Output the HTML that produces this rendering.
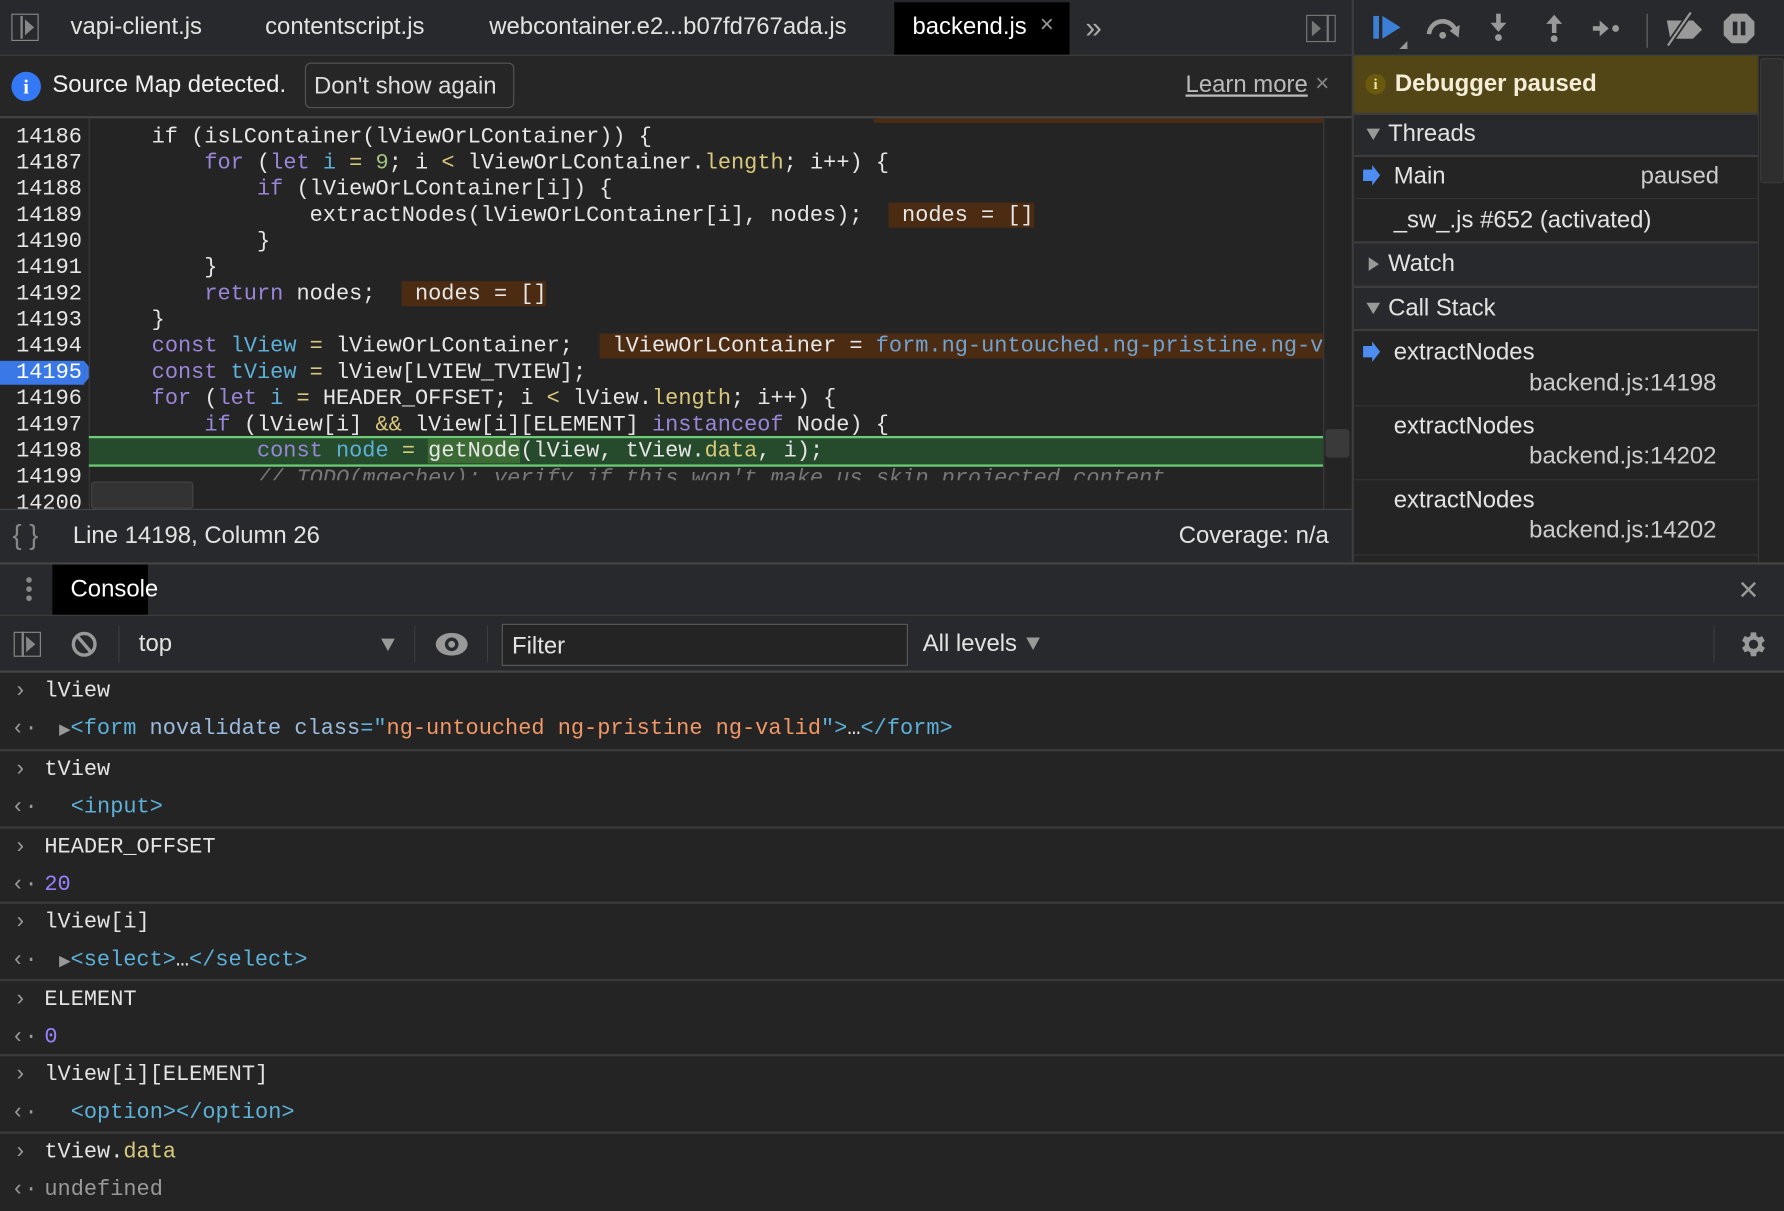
<!DOCTYPE html>
<html><head><meta charset="utf-8"><style>
html,body{margin:0;padding:0;background:#242424;overflow:hidden;width:1784px;height:1210px}
#w{position:absolute;left:0;top:0;width:1568px;height:1064px;transform:scale(1.13776,1.1383);transform-origin:0 0;background:#242424;font-family:"Liberation Sans",sans-serif;color:#e3e3e3;overflow:hidden}
.a{position:absolute}
.m{font-family:"Liberation Mono",monospace;font-size:19.3px;white-space:pre}
.s{font-size:21px;white-space:nowrap}
.k{color:#9a86d8}.b{color:#5db0d7}.y{color:#d9c97c}.g{color:#a1c181}
.iv{background:#4b2c12}
.ln{position:absolute;left:0;width:72px;text-align:right;color:#e6e6e6}
.cons{font-family:"Liberation Mono",monospace;font-size:19.3px;white-space:normal}
.cons .r{white-space:pre;position:relative;padding-left:39px}
.cons .sep{height:2px;background:#3a3a3a}
.pi{position:absolute;left:12px;color:#999}
.po{position:absolute;left:10px;color:#999}
.tri{display:inline-block;width:23px;text-align:right;color:#999;font-size:13px}
</style></head><body><div id="w">

<!-- top tab bar -->
<div class="a" style="left:0;top:0;width:1188px;height:48px;background:#28292c;border-bottom:1px solid #444"></div>
<div class="a" style="top:12px;left:10px;width:24px;height:24px;border:1.5px solid #888;box-sizing:border-box"></div>
<div class="a" style="left:18px;top:14px;width:2px;height:20px;background:#888"></div>
<div class="a" style="left:22px;top:17px;width:0;height:0;border-left:8px solid #888;border-top:7px solid transparent;border-bottom:7px solid transparent"></div>
<div class="a s" style="left:62px;top:12px">vapi-client.js</div>
<div class="a s" style="left:233px;top:12px">contentscript.js</div>
<div class="a s" style="left:430px;top:12px">webcontainer.e2...b07fd767ada.js</div>
<div class="a" style="left:786px;top:2px;width:154px;height:46px;background:#000"></div>
<div class="a s" style="left:802px;top:12px;color:#fff">backend.js</div>
<div class="a s" style="left:914px;top:10px;color:#999">×</div>
<div class="a s" style="left:954px;top:9px;color:#aaa;font-size:26px">»</div>
<div class="a" style="left:1148px;top:13px;width:26px;height:24px;border:1.5px solid #777;box-sizing:border-box"></div>
<div class="a" style="left:1166px;top:13px;width:1.5px;height:24px;background:#777"></div>
<div class="a" style="left:1153px;top:18px;border-left:8px solid #777;border-top:7px solid transparent;border-bottom:7px solid transparent"></div>

<!-- source map bar -->
<div class="a" style="left:0;top:49px;width:1188px;height:53px;background:#262626;border-bottom:2px solid #444"></div>
<div class="a" style="left:10px;top:63px;width:26px;height:26px;border-radius:50%;background:#3478f6;color:#fff;font-size:18px;font-weight:bold;text-align:center;line-height:26px;font-family:'Liberation Serif',serif">i</div>
<div class="a s" style="left:46px;top:63px;color:#f0f0f0">Source Map detected.</div>
<div class="a s" style="left:268px;top:55px;width:184px;height:40px;border:1.5px solid #555;border-radius:5px;box-sizing:border-box;padding:8px 0 0 7px;color:#ddd">Don't show again</div>
<div class="a s" style="left:1042px;top:63px;color:#bbb;text-decoration:underline">Learn more</div>
<div class="a s" style="left:1156px;top:62px;color:#888">×</div>

<!-- code area -->
<div class="a" style="left:0;top:104px;width:78px;height:343px;background:#242424;border-right:1px solid #3a3a3a"></div>
<div class="a" style="left:78px;top:104px;width:1085px;height:318px;overflow:hidden">
 <div class="a iv" style="left:690px;top:-10px;width:420px;height:14px"></div>
 <div class="m a" style="left:9px;top:5px;line-height:23px;color:#e6e6e6">    if (isLContainer(lViewOrLContainer)) {
        <span class="k">for</span> (<span class="k">let</span> <span class="b">i</span> <span class="y">=</span> <span class="g">9</span>; i <span class="y">&lt;</span> lViewOrLContainer.<span class="y">length</span>; i++) {
            <span class="k">if</span> (lViewOrLContainer[i]) {
                extractNodes(lViewOrLContainer[i], nodes);  <span class="iv"> nodes = []</span>
            }
        }
        <span class="k">return</span> nodes;  <span class="iv"> nodes = []</span>
    }
    <span class="k">const</span> <span class="b">lView</span> <span class="y">=</span> lViewOrLContainer;  <span class="iv"> lViewOrLContainer = <span style="color:#6fa3d4">form.ng-untouched.ng-pristine.ng-valid                  </span></span>
    <span class="k">const</span> <span class="b">tView</span> <span class="y">=</span> lView[LVIEW_TVIEW];
    <span class="k">for</span> (<span class="k">let</span> <span class="b">i</span> <span class="y">=</span> HEADER_OFFSET; i <span class="y">&lt;</span> lView.<span class="y">length</span>; i++) {
        <span class="k">if</span> (lView[i] <span class="y">&amp;&amp;</span> lView[i][ELEMENT] <span class="k">instanceof</span> Node) {
</div>
 <div class="a" style="left:0;top:279px;width:1085px;height:23px;background:#264a2c;border-top:2px solid #6ccb76;border-bottom:2px solid #6ccb76"></div>
 <div class="m a" style="left:9px;top:281px;line-height:23px;color:#e6e6e6">            <span class="k">const</span> <span class="b">node</span> <span class="y">=</span> <span style="background:#3c6a35">getNode</span>(lView, tView.<span class="y">data</span>, i);</div>
 <div class="m a" style="left:9px;top:305px;line-height:23px;color:#777;font-style:italic">            // TODO(mgechev): verify if this won't make us skip projected content.</div>
</div>
<div class="a m" style="left:0;top:104px;width:78px;height:343px;overflow:hidden;line-height:23px">
 <div class="ln" style="top:5px">14186</div><div class="ln" style="top:28px">14187</div><div class="ln" style="top:51px">14188</div><div class="ln" style="top:74px">14189</div><div class="ln" style="top:97px">14190</div><div class="ln" style="top:120px">14191</div><div class="ln" style="top:143px">14192</div><div class="ln" style="top:166px">14193</div><div class="ln" style="top:189px">14194</div>
 <div class="a" style="left:0;top:213px;width:74px;height:21px;background:#3b78e7"></div>
 <div class="a" style="left:74px;top:213px;border-left:8px solid #3b78e7;border-top:10.5px solid transparent;border-bottom:10.5px solid transparent"></div>
 <div class="ln" style="top:212px;color:#fff">14195</div><div class="ln" style="top:235px">14196</div><div class="ln" style="top:258px">14197</div><div class="ln" style="top:281px">14198</div><div class="ln" style="top:304px">14199</div><div class="ln" style="top:327px">14200</div>
</div>
<div class="a" style="left:79px;top:422px;width:1084px;height:25px;background:#242424"></div>
<div class="a" style="left:80px;top:423px;width:88px;height:22px;background:#333;border:1px solid #444;border-radius:3px"></div>
<div class="a" style="left:1163px;top:104px;width:25px;height:343px;background:#242424;border-left:1px solid #3a3a3a"></div>
<div class="a" style="left:1165px;top:377px;width:21px;height:25px;background:#3a3a3a;border-radius:3px"></div>

<!-- status bar -->
<div class="a" style="left:0;top:447px;width:1188px;height:47px;background:#28292c;border-top:1px solid #444"></div>
<div class="a s" style="left:11px;top:457px;color:#888;font-size:24px">{ }</div>
<div class="a s" style="left:64px;top:459px">Line 14198, Column 26</div>
<div class="a s" style="left:1036px;top:459px">Coverage: n/a</div>

<!-- sidebar -->
<div class="a" style="left:1188px;top:0;width:2px;height:494px;background:#3d3d3d"></div>
<div class="a" style="left:1190px;top:0;width:378px;height:48px;background:#28292c;border-bottom:1px solid #444"></div>
<svg class="a" style="left:1190px;top:0" width="378" height="48" viewBox="1190 0 378 48">
 <rect x="1207" y="14" width="5" height="20" fill="#3b7fd6"/><path d="M1215 14 L1231 24 L1215 34Z" fill="#3b7fd6"/><path d="M1237 36 L1230 43 L1237 43Z" fill="#999"/>
 <path d="M1256 30 A12 12 0 0 1 1279 26" stroke="#999" stroke-width="4" fill="none"/><path d="M1274 27 L1283 22 L1282 33Z" fill="#999"/><circle cx="1268" cy="31" r="3" fill="#999"/>
 <rect x="1315" y="12" width="4" height="10" fill="#999"/><path d="M1310 20 L1324 20 L1317 28Z" fill="#999"/><circle cx="1317" cy="33" r="3" fill="#999"/>
 <path d="M1359 21 L1373 21 L1366 13Z" fill="#999"/><rect x="1364" y="20" width="4" height="9" fill="#999"/><circle cx="1366" cy="34" r="3" fill="#999"/>
 <rect x="1400" y="23" width="8" height="4" fill="#999"/><path d="M1406 18 L1414 25 L1406 32Z" fill="#999"/><circle cx="1420" cy="25" r="3" fill="#999"/>
 <rect x="1447" y="12" width="1.5" height="30" fill="#555"/>
 <path d="M1465 18 L1488 18 L1496 26 L1488 34 L1468 34Z" fill="#999"/><path d="M1466 40 L1486 11" stroke="#28292c" stroke-width="5"/><path d="M1466 40 L1486 11" stroke="#999" stroke-width="2"/>
 <path d="M1522 12 L1535 12 L1542 19 L1542 31 L1535 38 L1522 38 L1515 31 L1515 19Z" fill="#999"/><rect x="1523" y="19" width="4" height="12" fill="#28292c"/><rect x="1530" y="19" width="4" height="12" fill="#28292c"/>
</svg>
<div class="a" style="left:1190px;top:49px;width:355px;height:50px;background:#524616;border-bottom:2px solid #3d3d3d"></div>
<div class="a" style="left:1200px;top:65px;width:18px;height:18px;border-radius:50%;background:#6b5a0e;color:#f0e6a0;font-size:13px;text-align:center;line-height:18px;font-weight:bold;font-family:'Liberation Serif',serif">i</div>
<div class="a s" style="left:1226px;top:62px;font-weight:bold;color:#f4eed8">Debugger paused</div>
<div class="a" style="left:1190px;top:101px;width:355px;height:35px;background:#28292c;border-bottom:2px solid #3d3d3d"></div>
<div class="a" style="left:1201px;top:113px;border-top:10px solid #999;border-left:6px solid transparent;border-right:6px solid transparent"></div>
<div class="a s" style="left:1220px;top:106px">Threads</div>
<div class="a" style="left:1190px;top:138px;width:355px;height:36px;background:#242424;border-bottom:1px solid #333"></div>
<svg class="a" style="left:1198px;top:145px" width="16" height="18"><path d="M0 4 L8 4 L8 0 L15 9 L8 18 L8 14 L0 14Z" fill="#4d8cf0"/></svg>
<div class="a s" style="left:1225px;top:143px">Main</div>
<div class="a s" style="left:1442px;top:143px;color:#ccc">paused</div>
<div class="a" style="left:1190px;top:175px;width:355px;height:37px;background:#242424;border-bottom:2px solid #3d3d3d"></div>
<div class="a s" style="left:1225px;top:182px">_sw_.js #652 (activated)</div>
<div class="a" style="left:1190px;top:214px;width:355px;height:37px;background:#28292c;border-bottom:2px solid #3d3d3d"></div>
<div class="a" style="left:1203px;top:226px;border-left:9px solid #999;border-top:6px solid transparent;border-bottom:6px solid transparent"></div>
<div class="a s" style="left:1220px;top:220px">Watch</div>
<div class="a" style="left:1190px;top:253px;width:355px;height:36px;background:#28292c;border-bottom:2px solid #3d3d3d"></div>
<div class="a" style="left:1201px;top:266px;border-top:10px solid #999;border-left:6px solid transparent;border-right:6px solid transparent"></div>
<div class="a s" style="left:1220px;top:259px">Call Stack</div>
<div class="a" style="left:1190px;top:291px;width:355px;height:203px;background:#242424"></div>
<div class="a" style="left:1190px;top:356px;width:355px;height:1px;background:#333"></div>
<div class="a" style="left:1190px;top:421px;width:355px;height:1px;background:#333"></div>
<div class="a" style="left:1190px;top:487px;width:355px;height:1px;background:#333"></div>
<svg class="a" style="left:1198px;top:300px" width="16" height="18"><path d="M0 4 L8 4 L8 0 L15 9 L8 18 L8 14 L0 14Z" fill="#4d8cf0"/></svg>
<div class="a s" style="left:1225px;top:298px">extractNodes</div><div class="a s" style="left:1344px;top:325px;color:#ccc">backend.js:14198</div>
<div class="a s" style="left:1225px;top:363px">extractNodes</div><div class="a s" style="left:1344px;top:389px;color:#ccc">backend.js:14202</div>
<div class="a s" style="left:1225px;top:428px">extractNodes</div><div class="a s" style="left:1344px;top:454px;color:#ccc">backend.js:14202</div>
<div class="a" style="left:1545px;top:49px;width:23px;height:445px;background:#242424;border-left:1px solid #3a3a3a"></div>
<div class="a" style="left:1547px;top:51px;width:19px;height:108px;background:#2e2e2e;border-radius:3px;border:1px solid #3a3a3a"></div>

<!-- console tabbar -->
<div class="a" style="left:0;top:494px;width:1568px;height:47px;background:#28292c;border-top:2px solid #444;border-bottom:1.5px solid #444;box-sizing:border-box"></div>
<div class="a" style="left:23px;top:507px;width:5px;height:5px;border-radius:50%;background:#888;box-shadow:0 8px 0 #888,0 16px 0 #888"></div>
<div class="a" style="left:46px;top:496px;width:84px;height:44px;background:#000"></div>
<div class="a s" style="left:62px;top:506px;color:#fff">Console</div>
<div class="a s" style="left:1528px;top:502px;color:#999;font-size:30px">×</div>

<!-- console toolbar -->
<div class="a" style="left:0;top:541px;width:1568px;height:48px;background:#28292c;border-bottom:2px solid #444"></div>
<div class="a" style="left:12px;top:555px;width:24px;height:22px;border:1.5px solid #888;box-sizing:border-box"></div>
<div class="a" style="left:19px;top:555px;width:1.5px;height:22px;background:#888"></div>
<div class="a" style="left:23px;top:559px;border-left:8px solid #888;border-top:7px solid transparent;border-bottom:7px solid transparent"></div>
<svg class="a" style="left:62px;top:554px" width="24" height="24"><circle cx="12" cy="12" r="9.5" stroke="#999" stroke-width="3" fill="none"/><path d="M6 5 L18 19" stroke="#999" stroke-width="3"/></svg>
<div class="a" style="left:104px;top:550px;width:1px;height:32px;background:#3d3d3d"></div>
<div class="a s" style="left:122px;top:554px">top</div>
<div class="a" style="left:335px;top:561px;border-top:11px solid #999;border-left:6px solid transparent;border-right:6px solid transparent"></div>
<div class="a" style="left:364px;top:550px;width:1px;height:32px;background:#3d3d3d"></div>
<svg class="a" style="left:382px;top:553px" width="30" height="26"><ellipse cx="15" cy="13" rx="14" ry="10" fill="#999"/><circle cx="15" cy="13" r="6" fill="#28292c"/><circle cx="15" cy="13" r="3" fill="#999"/></svg>
<div class="a" style="left:428px;top:550px;width:1px;height:32px;background:#3d3d3d"></div>
<div class="a" style="left:441px;top:548px;width:357px;height:37px;background:#242424;border:1.5px solid #5a5a5a;box-sizing:border-box"></div>
<div class="a s" style="left:450px;top:556px">Filter</div>
<div class="a s" style="left:811px;top:554px">All levels</div>
<div class="a" style="left:902px;top:560px;border-top:11px solid #999;border-left:6px solid transparent;border-right:6px solid transparent"></div>
<div class="a" style="left:1506px;top:550px;width:1px;height:32px;background:#3d3d3d"></div>
<svg class="a" style="left:1526px;top:552px" width="28" height="28" viewBox="0 0 24 24"><path fill="#999" d="M19.4 13a7.8 7.8 0 0 0 0-2l2.1-1.6-2-3.5-2.5 1a7.3 7.3 0 0 0-1.7-1L15 3h-4l-.4 2.8a7.3 7.3 0 0 0-1.7 1l-2.5-1-2 3.5L6.5 11a7.8 7.8 0 0 0 0 2l-2.1 1.6 2 3.5 2.5-1a7.3 7.3 0 0 0 1.7 1L11 21h4l.4-2.8a7.3 7.3 0 0 0 1.7-1l2.5 1 2-3.5zM13 15.5A3.5 3.5 0 1 1 13 8.5a3.5 3.5 0 0 1 0 7z"/></svg>

<!-- console entries -->
<div class="a cons" style="left:0;top:591px;width:1568px;line-height:33px;color:#e3e3e3">
<div class="r" style="height:33px"><span class="pi">›</span>lView</div>
<div class="r" style="height:34px"><span class="po">‹·</span><span class="tri">▶</span><span class="b">&lt;form</span> <span style="color:#9bbbdc">novalidate</span> <span style="color:#9bbbdc">class</span><span class="b">="</span><span style="color:#f29766">ng-untouched ng-pristine ng-valid</span><span class="b">"&gt;</span>…<span class="b">&lt;/form&gt;</span></div>
<div class="sep"></div>
<div class="r" style="height:33px"><span class="pi">›</span>tView</div>
<div class="r" style="height:33px"><span class="po">‹·</span>  <span class="b">&lt;input&gt;</span></div>
<div class="sep"></div>
<div class="r" style="height:33px"><span class="pi">›</span>HEADER_OFFSET</div>
<div class="r" style="height:31px"><span class="po">‹·</span><span style="color:#9980ff">20</span></div>
<div class="sep"></div>
<div class="r" style="height:33px"><span class="pi">›</span>lView[i]</div>
<div class="r" style="height:33px"><span class="po">‹·</span><span class="tri">▶</span><span class="b">&lt;select&gt;</span>…<span class="b">&lt;/select&gt;</span></div>
<div class="sep"></div>
<div class="r" style="height:33px"><span class="pi">›</span>ELEMENT</div>
<div class="r" style="height:31px"><span class="po">‹·</span><span style="color:#9980ff">0</span></div>
<div class="sep"></div>
<div class="r" style="height:33px"><span class="pi">›</span>lView[i][ELEMENT]</div>
<div class="r" style="height:33px"><span class="po">‹·</span>  <span class="b">&lt;option&gt;&lt;/option&gt;</span></div>
<div class="sep"></div>
<div class="r" style="height:33px"><span class="pi">›</span>tView.<span class="y">data</span></div>
<div class="r" style="height:31px;color:#999"><span class="po">‹·</span>undefined</div>
</div>

</div></body></html>
